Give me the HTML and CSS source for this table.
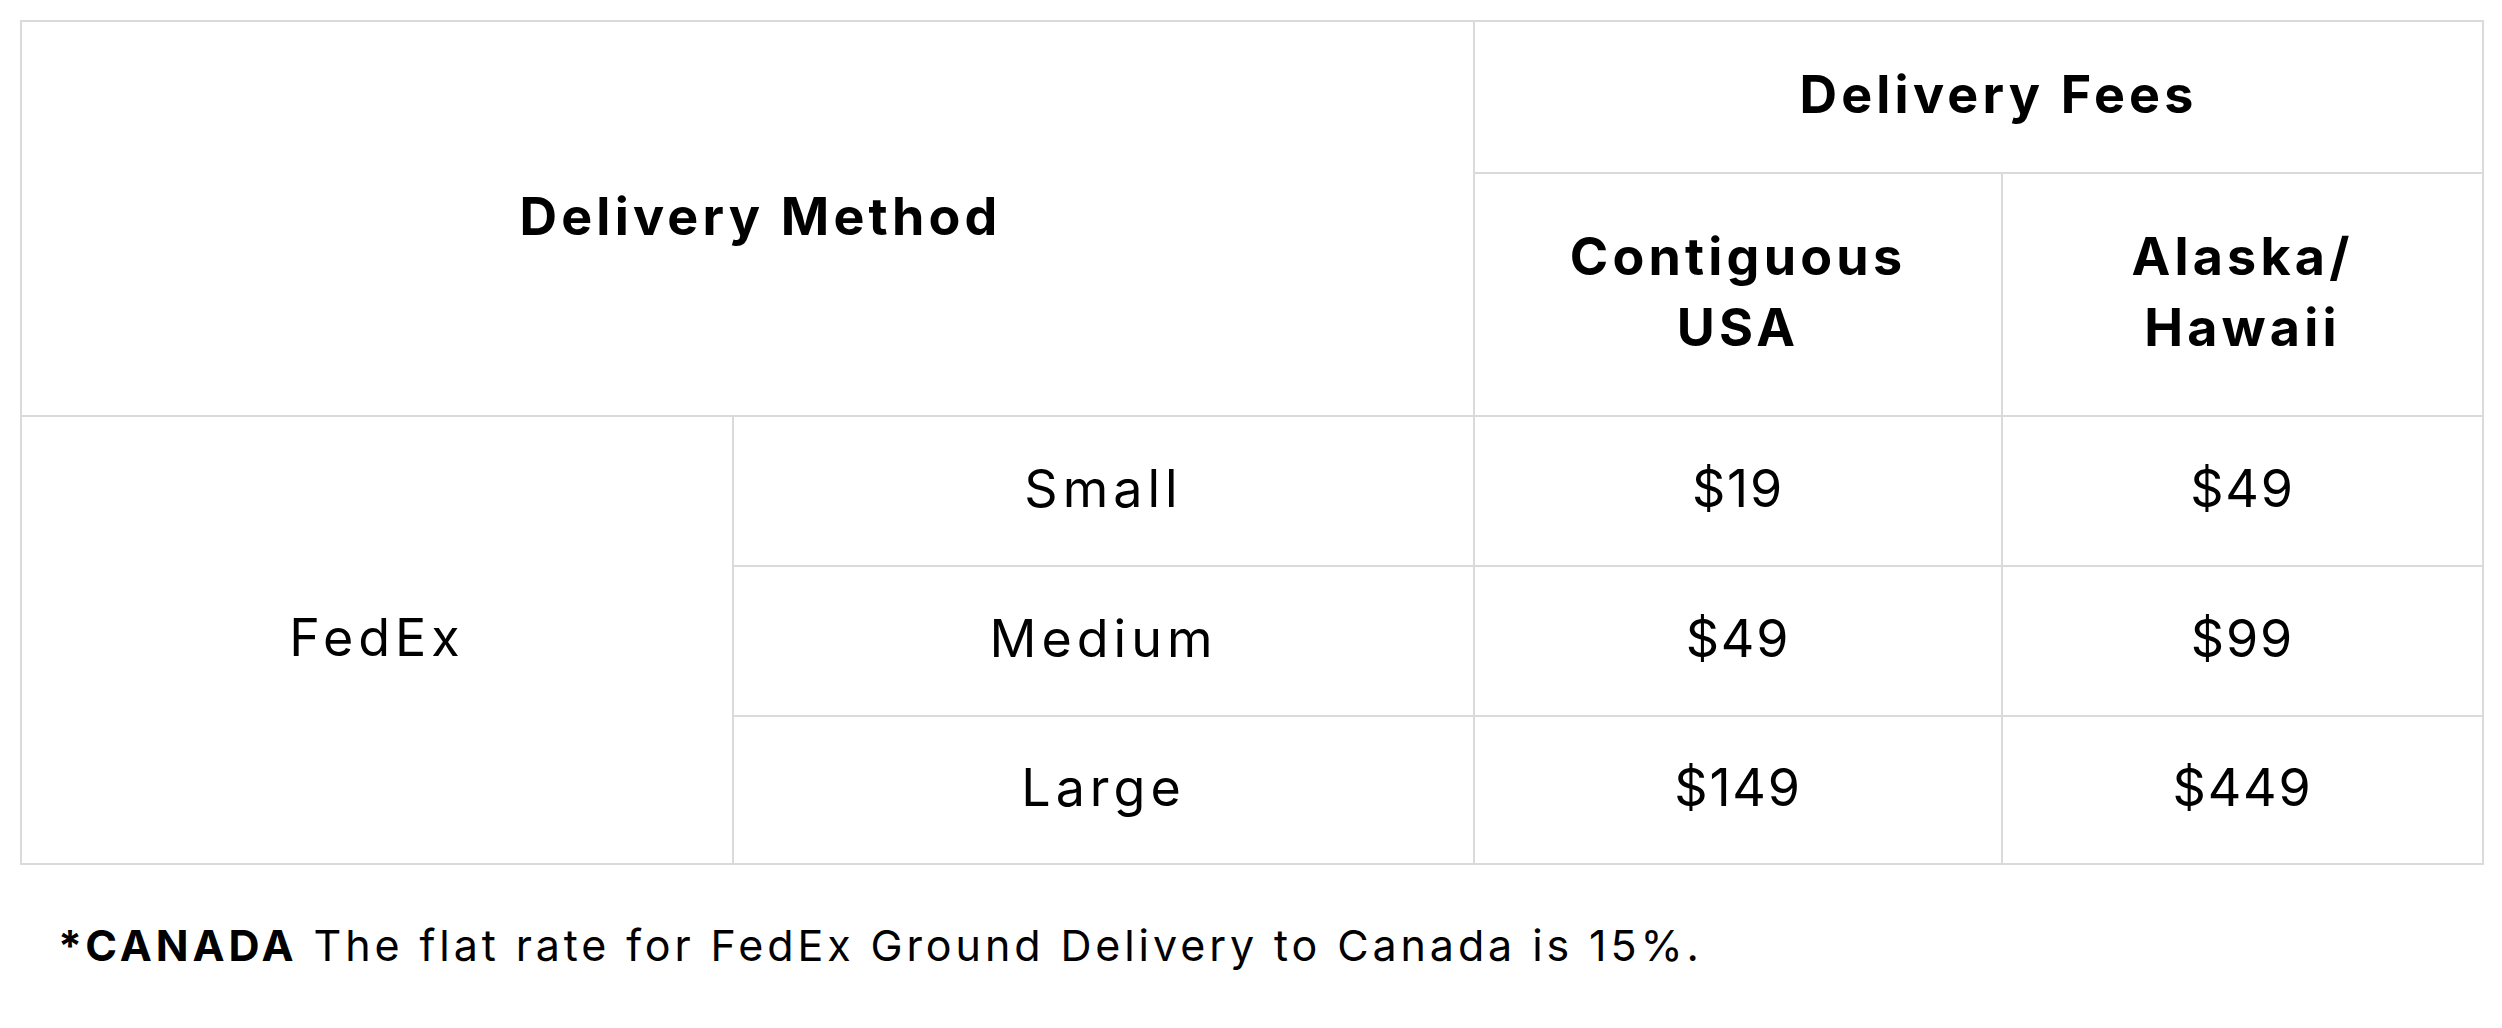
FILE: index.html
```html
<!DOCTYPE html>
<html lang="en">
<head>
<meta charset="utf-8">
<title>Delivery Fees</title>
<link rel="stylesheet" href="styles.css">
</head>
<body>
<div class="page">
  <table class="fees">
    <colgroup>
      <col class="c-carrier">
      <col class="c-size">
      <col class="c-usa">
      <col class="c-ak">
    </colgroup>
    <thead>
      <tr class="r-head1">
        <th class="span-head method" colspan="2" rowspan="2">Delivery Method</th>
        <th class="span-head fees-head" colspan="2">Delivery Fees</th>
      </tr>
      <tr class="r-head2">
        <th>Contiguous<br>USA</th>
        <th>Alaska/<br>Hawaii</th>
      </tr>
    </thead>
    <tbody>
      <tr class="r-body">
        <td rowspan="3">FedEx</td>
        <td>Small</td>
        <td class="price">$19</td>
        <td class="price">$49</td>
      </tr>
      <tr class="r-body">
        <td>Medium</td>
        <td class="price">$49</td>
        <td class="price">$99</td>
      </tr>
      <tr class="r-body r-last">
        <td>Large</td>
        <td class="price">$149</td>
        <td class="price">$449</td>
      </tr>
    </tbody>
  </table>
  <p class="note"><strong>*CANADA</strong> The flat rate for FedEx Ground Delivery to Canada is 15%.</p>
</div>
</body>
</html>
```

FILE: styles.css
```css
html, body {
  margin: 0;
  padding: 0;
  background: #ffffff;
}

body {
  font-family: "Inter", "Liberation Sans", sans-serif;
  color: #000000;
}

.page {
  padding: 20px 20px 0 20px;
}

.fees {
  width: 2462px;
  border-collapse: collapse;
  table-layout: fixed;
  border: 2px solid #dadada;
}

.c-carrier { width: 712px; }
.c-size { width: 741px; }
.c-usa { width: 528px; }
.c-ak { width: 481px; }

.fees th,
.fees td {
  border: 2px solid #dadada;
  text-align: center;
  vertical-align: middle;
  padding: 0 20px 5px 20px;
  font-size: 52px;
  line-height: 71px;
}

.fees th {
  font-weight: 700;
  letter-spacing: 4.2px;
}

.fees td {
  font-weight: 400;
  letter-spacing: 5px;
}

.fees td.price {
  letter-spacing: 1.8px;
}

.fees th.method {
  padding-left: 46px;
}

.fees th.fees-head {
  padding-left: 60px;
}

.r-head1 { height: 152px; }
.r-head2 { height: 243px; }
.r-body { height: 150px; }
.r-last { height: 148px; }

.note {
  margin: 0;
  padding: 50px 0 0 38px;
  font-size: 43px;
  line-height: 60px;
  letter-spacing: 3.9px;
}

.note strong {
  font-weight: 700;
}
```
